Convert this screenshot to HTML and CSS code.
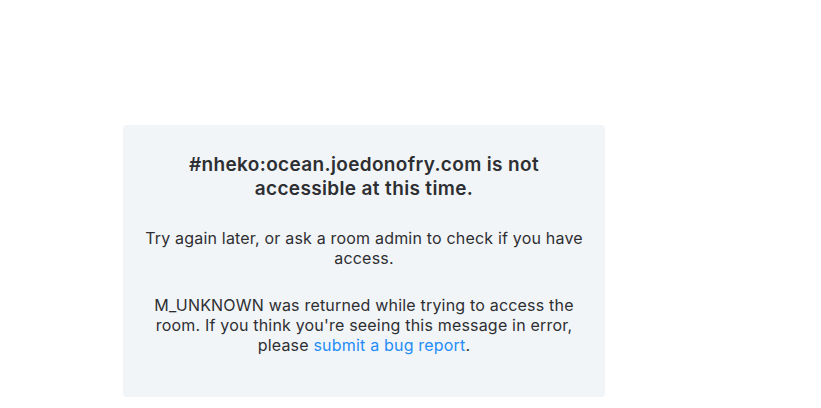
FILE: index.html
```html
<!DOCTYPE html>
<html>
<head>
<meta charset="utf-8">
<link rel="stylesheet" href="styles.css">
</head>
<body>
<div class="page">
  <div class="card">
    <h3 class="title">#nheko:ocean.joedonofry.com is not accessible at this time.</h3>
    <p class="msg">Try again later, or ask a room admin to check if you have access.</p>
    <p class="msg">M_UNKNOWN was returned while trying to access the room. If you think you're seeing this message in error, please <a class="link" href="#">submit a bug report</a>.</p>
  </div>
</div>
</body>
</html>
```
FILE: styles.css
```css
html, body {
  margin: 0;
  padding: 0;
  background: #ffffff;
}
.page {
  padding: 125px 0 0 123px;
  font-family: Inter, "Noto Sans", sans-serif;
  color: #2e2f32;
}
.card {
  box-sizing: border-box;
  width: 482px;
  height: 272px;
  background: #f2f5f8;
  border-radius: 4px;
  padding: 28px 21px 0;
  text-align: center;
}
.title {
  margin: 0;
  font-size: 19px;
  font-weight: 600;
  line-height: 24px;
  letter-spacing: 0.35px;
}
.msg {
  margin: 27px 0 0;
  font-size: 16px;
  line-height: 20px;
  letter-spacing: 0.19px;
}
.link {
  color: #238cf5;
  text-decoration: none;
}
```
